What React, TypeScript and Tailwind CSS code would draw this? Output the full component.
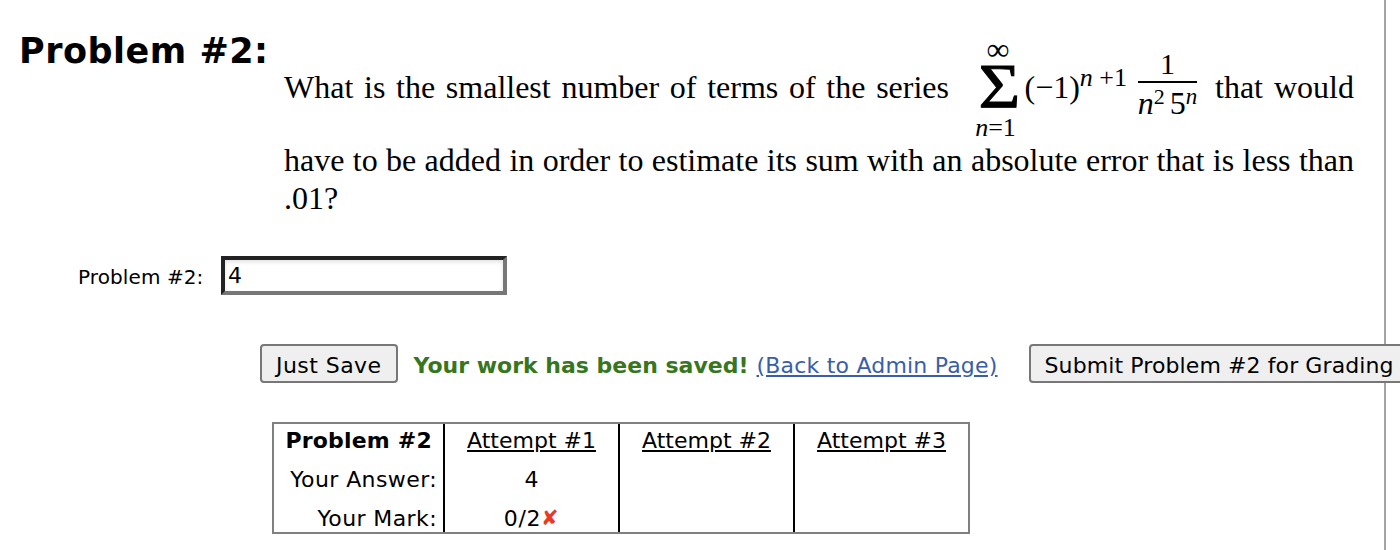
const serif = "font-['Liberation_Serif',serif]";

function Formula() {
  return (
    <span className="ml-auto mr-[18px] inline-flex items-center h-[100px] text-[32px] leading-none shrink-0">
      <span className="self-start flex flex-col items-center w-[42px]">
        <span className="ml-[5px] text-[32px] leading-[24px]">∞</span>
        <span className="ml-[7px] text-[63px] leading-[52px] scale-x-[1.14] [-webkit-text-stroke:0.9px_black]">Σ</span>
        <span className="mt-[3px] text-[26px] leading-[24px] whitespace-nowrap"><i>n</i>=1</span>
      </span>
      <span className="ml-[8px] whitespace-nowrap">
        (−1)<sup className="text-[26px] -top-[12px] relative align-baseline"><i>n</i> +1</sup>
      </span>
      <span className="flex flex-col items-center ml-[11px] w-[59px]">
        <span className="text-[30px] leading-[26px] pb-[4px]">1</span>
        <span className="w-full h-[2px] bg-black" />
        <span className="text-[32px] leading-[40px] whitespace-nowrap">
          <i>n</i><sup className="text-[22px] relative -top-[10px] align-baseline">2</sup><span className="ml-[5px]">5</span><sup className="text-[23px] relative -top-[10px] align-baseline"><i>n</i></sup>
        </span>
      </span>
    </span>
  );
}

export default function App() {
  return (
    <div className="relative w-[1400px] h-[550px] overflow-hidden bg-white text-black font-['DejaVu_Sans',sans-serif]">
      <div className="absolute left-[1384px] top-0 bottom-0 w-[2px] bg-[#a4a4a4]" />
      <div className="relative pt-[31px]">
        <h1 className="ml-[19px] text-[35px] leading-[40px] font-bold tracking-[0.5px]">Problem #2:</h1>
        <div className={`${serif} ml-[284px] w-[1070px] -mt-[21px] text-[32px] leading-[38px] text-justify`}>
          <div className="h-[74px] mb-[17px] flex items-center">
            <span className="[word-spacing:2.7px] whitespace-nowrap">What is the smallest number of terms of the series</span>
            <Formula />
            <span className="[word-spacing:3px] whitespace-nowrap">that would</span>
          </div>
          <p>have to be added in order to estimate its sum with an absolute error that is less than .01?</p>
        </div>
        <div className="flex items-center ml-[78px] mt-[39px] h-[38px] text-[20px]">
          <span className="w-[143px] pt-[4px] tracking-[0.1px]">Problem #2:</span>
          <input
            readOnly
            value="4"
            className="w-[286px] h-[39px] px-[3px] text-[22px] bg-white border-[4px] border-t-[#222] border-l-[#222] border-r-[#777] border-b-[#777] shadow-[inset_0_2px_4px_rgba(0,0,0,0.12)] outline-none"
          />
        </div>
        <div className="flex items-center ml-[260px] mt-[50px] h-[39px] text-[22px] whitespace-nowrap">
          <button className="shrink-0 h-[39px] pt-[3px] px-[14px] rounded-[4px] border-2 border-[#777] bg-[#efefef] tracking-[0.45px]">Just Save</button>
          <span className="shrink-0 ml-[16px] pt-[4px] font-bold text-[#38761d]">Your work has been saved!</span>
          <a href="#" className="shrink-0 ml-[8px] pt-[4px] text-[#3a5ea8] underline tracking-[0.2px]">(Back to Admin Page)</a>
          <button className="shrink-0 ml-[31px] h-[39px] pt-[3px] px-[14px] rounded-[4px] border-2 border-[#777] bg-[#efefef] tracking-[0.1px]">Submit Problem #2 for Grading</button>
        </div>
        <div className="ml-[272px] mt-[39px] w-[698px] h-[112px] border-2 border-[#808080] grid grid-cols-[171px_175px_175px_1fr] text-[22px]">
          <div className="border-r-2 border-black pr-[6px] text-right">
            <div className="h-[35px] pb-[2px] flex items-center justify-end pr-[5px] font-bold tracking-[0.2px]">Problem #2</div>
            <div className="h-[39px] pt-[2px] flex items-center justify-end tracking-[0.4px]">Your Answer:</div>
            <div className="h-[34px] pt-[7px] flex items-center justify-end tracking-[0.4px]">Your Mark:</div>
          </div>
          <div className="border-r-2 border-black text-center">
            <div className="h-[35px] pb-[2px] flex items-center justify-center underline">Attempt #1</div>
            <div className="h-[39px] pt-[2px] flex items-center justify-center">4</div>
            <div className="h-[34px] pt-[7px] flex items-center justify-center tracking-[0.6px]">0/2<span className="text-[#e83a26] font-bold text-[21px]">✘</span></div>
          </div>
          <div className="border-r-2 border-black text-center">
            <div className="h-[35px] pb-[2px] flex items-center justify-center underline">Attempt #2</div>
          </div>
          <div className="text-center">
            <div className="h-[35px] pb-[2px] flex items-center justify-center underline">Attempt #3</div>
          </div>
        </div>
      </div>
    </div>
  );
}
